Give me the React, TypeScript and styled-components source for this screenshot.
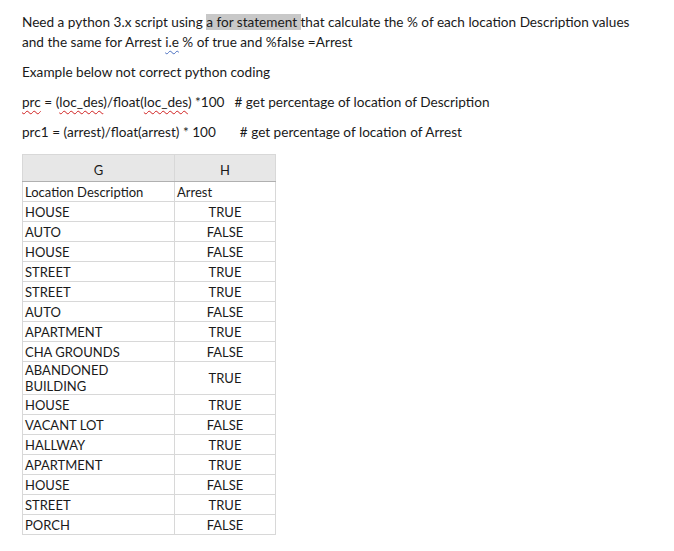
import React from 'react';
import styled, { createGlobalStyle } from 'styled-components';

const Global = createGlobalStyle`
  body { margin: 0; background: #fff; font-family: Lato, "Open Sans", sans-serif; color: #1a1a1a; }
`;

const Page = styled.div`
  padding: 12px 22px; font-size: 13.6px;
`;

const Para = styled.p<{ $gap?: number }>`
  margin: 0 0 ${(p) => p.$gap ?? 10}px; line-height: 20px; white-space: nowrap;
`;

const Hl = styled.span`background: #c8c8c8;`;

const Squig = styled.span<{ $c?: string }>`
  text-decoration: underline wavy ${(p) => p.$c ?? '#d02020'};
  text-decoration-thickness: 1px;
  text-underline-offset: 3px;
`;

const Comment = styled.span<{ $pad: number }>`padding-left: ${(p) => p.$pad}px;`;

const Table = styled.table`
  border-collapse: collapse; margin-top: 0; font-size: 13px;
  td, th { border: 1px solid #d8d8d8; height: 19px; padding: 0 2px; }
`;

const Head = styled.th`
  background: #e7e7e7; font-weight: normal; text-align: center; height: 22px !important;
  border-bottom: 1px solid #b0b0b0 !important; padding-top: 4px !important;
`;

const Cell = styled.td<{ $center?: boolean }>`
  text-align: ${(p) => (p.$center ? 'center' : 'left')};
`;

const rows: [string, string][] = [
  ['HOUSE', 'TRUE'], ['AUTO', 'FALSE'], ['HOUSE', 'FALSE'], ['STREET', 'TRUE'],
  ['STREET', 'TRUE'], ['AUTO', 'FALSE'], ['APARTMENT', 'TRUE'], ['CHA GROUNDS', 'FALSE'],
  ['ABANDONED BUILDING', 'TRUE'], ['HOUSE', 'TRUE'], ['VACANT LOT', 'FALSE'], ['HALLWAY', 'TRUE'],
  ['APARTMENT', 'TRUE'], ['HOUSE', 'FALSE'], ['STREET', 'TRUE'], ['PORCH', 'FALSE'],
];

export default function App() {
  return (
    <Page>
      <Global />
      <Para>
        Need a python 3.x script using <Hl>a for statement </Hl>that calculate the % of each location Description values
        <br />and the same for Arrest <Squig $c="#4a6fc0">i.e</Squig> % of true and %false =Arrest
      </Para>
      <Para>Example below not correct python coding</Para>
      <Para>
        <Squig>prc</Squig> = (<Squig>loc_des</Squig>)/float(<Squig>loc_des</Squig>) *100<Comment $pad={10}># get percentage of location of Description</Comment>
      </Para>
      <Para $gap={12}>
        prc1 = (arrest)/float(arrest) * 100<Comment $pad={24}># get percentage of location of Arrest</Comment>
      </Para>
      <Table>
        <thead>
          <tr>
            <Head style={{ width: 147 }}>G</Head>
            <Head style={{ width: 96 }}>H</Head>
          </tr>
        </thead>
        <tbody>
          <tr><Cell>Location Description</Cell><Cell>Arrest</Cell></tr>
          {rows.map(([l, a], i) => (
            <tr key={i}><Cell>{l}</Cell><Cell $center>{a}</Cell></tr>
          ))}
        </tbody>
      </Table>
    </Page>
  );
}
